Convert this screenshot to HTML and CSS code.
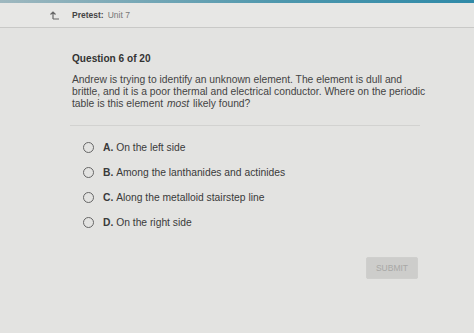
FILE: index.html
```html
<!DOCTYPE html>
<html>
<head>
<meta charset="utf-8">
<link rel="stylesheet" href="styles.css">
</head>
<body>
<div class="topbar"></div>
<header class="header">
  <svg class="back" width="12" height="10" viewBox="0 0 12 10"><path d="M4 9 V2 M1.5 4.5 L4 2 L6.5 4.5 M4 9 H10" fill="none" stroke="#666" stroke-width="1.2"/></svg>
  <span class="title">Pretest:</span>
  <span class="unit">Unit 7</span>
</header>
<main class="main">
  <h2 class="qnum">Question 6 of 20</h2>
  <p class="prompt">Andrew is trying to identify an unknown element. The element is dull and brittle, and it is a poor thermal and electrical conductor. Where on the periodic table is this element <em>most</em> likely found?</p>
  <hr class="rule">
  <ul class="options">
    <li class="option"><span class="radio"></span><b>A.</b>&nbsp;On the left side</li>
    <li class="option"><span class="radio"></span><b>B.</b>&nbsp;Among the lanthanides and actinides</li>
    <li class="option"><span class="radio"></span><b>C.</b>&nbsp;Along the metalloid stairstep line</li>
    <li class="option"><span class="radio"></span><b>D.</b>&nbsp;On the right side</li>
  </ul>
  <div class="actions"><button class="submit">SUBMIT</button></div>
</main>
</body>
</html>
```
FILE: styles.css
```css
html, body {
  margin: 0;
  padding: 0;
}
body {
  background: #e3e3e1;
  font-family: "Liberation Sans", Arial, sans-serif;
  color: #3a3a3a;
  width: 474px;
  height: 333px;
  overflow: hidden;
}
.topbar {
  height: 3px;
  background: linear-gradient(90deg, #9fb8bf, #4d97ad 60%, #2f8aa8);
}
.header {
  height: 24px;
  display: flex;
  align-items: center;
  padding-left: 49px;
  border-bottom: 1px solid #c9c9c7;
  background: #e7e7e5;
  font-size: 8.5px;
}
.back {
  margin-right: 11px;
}
.title {
  font-weight: bold;
  color: #444;
  margin-right: 4px;
}
.unit {
  color: #777;
}
.main {
  padding-left: 72px;
  width: 350px;
}
.qnum {
  font-size: 10.1px;
  font-weight: bold;
  margin: 25px 0 0;
  color: #333;
}
.prompt {
  font-size: 10.3px;
  line-height: 12px;
  margin: 10px 0 0;
  width: 358px;
  color: #444;
}
.prompt em {
  display: inline-block;
  line-height: 12px;
  margin: 0 1px;
}
.rule {
  border: 0;
  border-top: 1px solid #d2d2d0;
  margin: 15px 0 0 -2px;
  width: 350px;
}
.options {
  list-style: none;
  margin: 9px 0 0;
  padding: 0 0 0 11px;
}
.option {
  display: flex;
  align-items: center;
  height: 25px;
  font-size: 10.3px;
  color: #3a3a3a;
}
.option b {
  font-weight: bold;
}
.radio {
  width: 11px;
  height: 11px;
  border: 1.4px solid #666;
  border-radius: 50%;
  margin-right: 9px;
  box-sizing: border-box;
}
.actions {
  display: flex;
  justify-content: flex-end;
  width: 346px;
  margin-top: 22px;
}
.submit {
  width: 52px;
  height: 22px;
  border: 1px solid #cfcfcd;
  border-radius: 2px;
  background: #cdcdcb;
  color: #a8a8a6;
  font-family: "Liberation Sans", Arial, sans-serif;
  font-size: 8.5px;
  padding: 0;
}
```
